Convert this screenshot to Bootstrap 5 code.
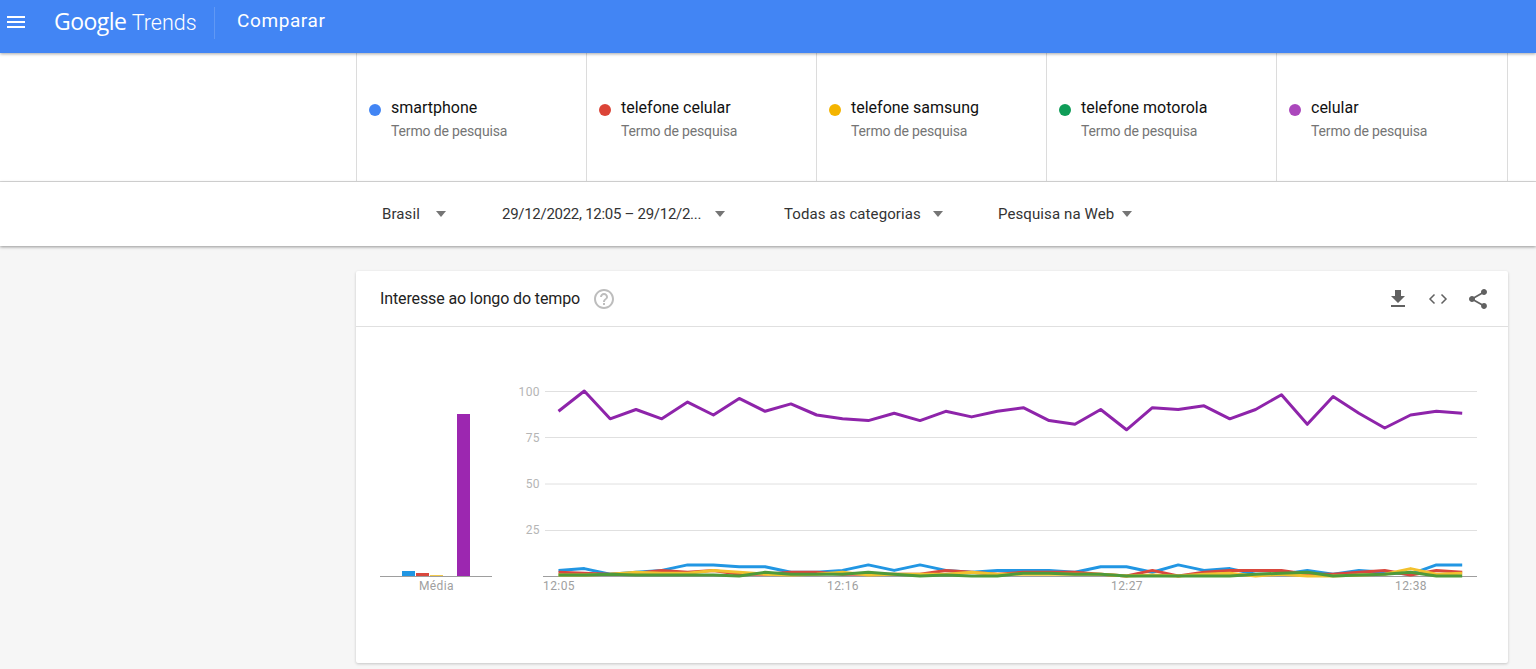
<!DOCTYPE html>
<html lang="pt-BR">
<head>
<meta charset="utf-8">
<title>Google Trends - Comparar</title>
<link href="https://cdn.jsdelivr.net/npm/bootstrap@5.3.0/dist/css/bootstrap.min.css" rel="stylesheet">
<style>
html,body{height:669px;overflow:hidden}
body{background:#f6f6f6;font-family:Roboto,"Liberation Sans",sans-serif;color:#212121}
.gt-top{background:#4285f4;height:53px;padding:0;box-shadow:0 1px 3px rgba(0,0,0,.35);position:relative;z-index:3;align-items:flex-start;flex-wrap:nowrap;justify-content:flex-start}
.gt-menu{width:24px;height:24px;margin:10px 0 0 4px;fill:#fff;flex:none}
.gt-logo{margin:5px 0 0 26px;color:#fff;font-size:23px;line-height:32px;white-space:nowrap;font-family:"Open Sans",sans-serif;letter-spacing:-.55px;width:144px;flex:none}
.gt-logo span{font-family:Roboto,sans-serif;font-weight:300;letter-spacing:0;font-size:21.5px}
.gt-sep{width:1px;height:32px;margin:7px 0 0 16px;background:rgba(255,255,255,.16);flex:none}
.gt-title{margin:5px 0 0 22px;color:#fff;font-size:19px;line-height:32px;letter-spacing:.6px}
.gt-terms{background:#fff;height:129px;border-bottom:1px solid #dcdcdc;padding-left:356px}
.gt-term{width:230px;height:128px;border-left:1px solid #dcdcdc;padding:43px 0 0 12px;display:flex;flex:none}
.gt-term:last-child{width:232px;border-right:1px solid #dcdcdc}
.gt-dot{width:12px;height:12px;border-radius:50%;margin:8px 10px 0 0;flex:none}
.gt-name{font-size:16px;line-height:24px;color:#111}
.gt-sub{font-size:14px;line-height:20px;color:#757575;margin-top:1px;letter-spacing:-.15px}
.gt-filters{background:#fff;height:64px;padding-left:382px;box-shadow:0 1px 3px rgba(0,0,0,.4);position:relative;z-index:2;font-size:15px;color:#333;letter-spacing:.1px}
.gt-arrow{width:0;height:0;border-left:5.5px solid transparent;border-right:5.5px solid transparent;border-top:6px solid #757575;flex:none}
.gt-f1{width:120px}.gt-f2{width:282px}.gt-f3{width:214px}
.gt-f1 .gt-arrow{margin-left:16px}
.gt-f2 .gt-arrow{margin-left:14px}
.gt-f2 span{letter-spacing:-.28px}
.gt-f3 .gt-arrow{margin-left:12px}
.gt-f4 .gt-arrow{margin-left:8px}
.gt-wrap{margin:25px 28px 0 356px}
.gt-card{height:392px;border:0;border-radius:2px;box-shadow:0 1px 3px rgba(0,0,0,.2);background:#fff}
.gt-head{height:56px;padding:0 18px 0 24px;background:#fff;border-bottom:1px solid #e0e0e0;font-size:16px;color:#222;letter-spacing:-.12px}
.gt-help{width:24px;height:24px;fill:#bdbdbd;margin-left:12px}
.gt-ico{width:24px;height:24px;fill:#616161;margin-left:16px}
.gt-code{fill:none;stroke:#616161;stroke-width:1.5}
.gt-canvas{padding:0;height:336px}
.gt-canvas svg{display:block;width:1152px;height:336px}
.gt-lab{font:12px Roboto,sans-serif;fill:#a0a0a0;letter-spacing:.4px}
.gt-laby{fill:#b5b5b5}
</style>
</head>
<body>
<nav class="navbar gt-top">
  <svg class="gt-menu" viewBox="0 0 24 24"><path d="M3 18h18v-2H3v2zm0-5h18v-2H3v2zm0-7v2h18V6H3z"/></svg>
  <div class="gt-logo">Google <span>Trends</span></div>
  <div class="gt-sep"></div>
  <div class="gt-title">Comparar</div>
</nav>
<section class="d-flex gt-terms">
  <div class="gt-term"><i class="gt-dot" style="background:#4285f4"></i><div><div class="gt-name">smartphone</div><div class="gt-sub">Termo de pesquisa</div></div></div>
  <div class="gt-term"><i class="gt-dot" style="background:#db4437"></i><div><div class="gt-name">telefone celular</div><div class="gt-sub">Termo de pesquisa</div></div></div>
  <div class="gt-term"><i class="gt-dot" style="background:#f4b400"></i><div><div class="gt-name">telefone samsung</div><div class="gt-sub">Termo de pesquisa</div></div></div>
  <div class="gt-term"><i class="gt-dot" style="background:#0f9d58"></i><div><div class="gt-name">telefone motorola</div><div class="gt-sub">Termo de pesquisa</div></div></div>
  <div class="gt-term"><i class="gt-dot" style="background:#ab47bc"></i><div><div class="gt-name">celular</div><div class="gt-sub">Termo de pesquisa</div></div></div>
</section>
<section class="d-flex align-items-center gt-filters">
  <div class="d-flex align-items-center gt-f1"><span>Brasil</span><i class="gt-arrow"></i></div>
  <div class="d-flex align-items-center gt-f2"><span>29/12/2022, 12:05 – 29/12/2...</span><i class="gt-arrow"></i></div>
  <div class="d-flex align-items-center gt-f3"><span>Todas as categorias</span><i class="gt-arrow"></i></div>
  <div class="d-flex align-items-center gt-f4"><span>Pesquisa na Web</span><i class="gt-arrow"></i></div>
</section>
<main class="gt-wrap">
  <div class="card gt-card">
    <div class="card-header d-flex align-items-center gt-head">
      <span>Interesse ao longo do tempo</span>
      <svg class="gt-help" viewBox="0 0 24 24"><path d="M11 18h2v-2h-2v2zm1-16C6.48 2 2 6.48 2 12s4.48 10 10 10 10-4.48 10-10S17.52 2 12 2zm0 18c-4.41 0-8-3.59-8-8s3.59-8 8-8 8 3.59 8 8-3.59 8-8 8zm0-14c-2.21 0-4 1.79-4 4h2c0-1.1.9-2 2-2s2 .9 2 2c0 2-3 1.75-3 5h2c0-2.25 3-2.5 3-5 0-2.21-1.79-4-4-4z"/></svg>
      <div class="ms-auto d-flex align-items-center">
        <svg class="gt-ico" viewBox="0 0 24 24"><path d="M19 9h-4V3H9v6H5l7 7 7-7zM5 18v2h14v-2H5z"/></svg>
        <svg class="gt-ico gt-code" viewBox="0 0 24 24"><path d="M8.500 7.500L4 12l4.500 4.500M15.500 7.500L20 12l-4.500 4.500"/></svg>
        <svg class="gt-ico" viewBox="0 0 24 24"><path d="M18 16.080c-.76 0-1.440.3-1.960.77L8.910 12.700c.05-.23.09-.46.09-.7s-.04-.47-.09-.7l7.050-4.110c.54.5 1.250.81 2.040.81 1.660 0 3-1.340 3-3s-1.340-3-3-3-3 1.340-3 3c0 .24.04.47.09.7L8.040 9.810C7.500 9.310 6.790 9 6 9c-1.660 0-3 1.340-3 3s1.340 3 3 3c.79 0 1.500-.31 2.040-.81l7.120 4.160c-.05.21-.08.43-.08.65 0 1.610 1.310 2.920 2.920 2.920 1.610 0 2.920-1.310 2.920-2.920s-1.310-2.920-2.920-2.920z"/></svg>
      </div>
    </div>
    <div class="card-body gt-canvas">
      <svg id="gtChart" viewBox="0 0 1152 336" xmlns="http://www.w3.org/2000/svg">
        <g stroke="#e0e0e0" stroke-width="1">
          <line x1="189" x2="1121" y1="64.500" y2="64.500"/>
          <line x1="189" x2="1121" y1="110.500" y2="110.500"/>
          <line x1="189" x2="1121" y1="157" y2="157"/>
          <line x1="189" x2="1121" y1="203.500" y2="203.500"/>
        </g>
        <line x1="187" x2="1121" y1="249.500" y2="249.500" stroke="#9e9e9e"/>
        <line x1="24" x2="136" y1="249.500" y2="249.500" stroke="#9e9e9e"/>
        <g class="gt-lab gt-laby" text-anchor="end">
          <text x="184" y="69">100</text><text x="184" y="115">75</text><text x="184" y="161">50</text><text x="184" y="207">25</text>
        </g>
        <g class="gt-lab" text-anchor="middle">
          <text x="203" y="263">12:05</text><text x="487" y="263">12:16</text><text x="771" y="263">12:27</text><text x="1055" y="263">12:38</text>
          <text x="80.500" y="263">Média</text>
        </g>
        <rect x="46" y="244" width="13" height="5" fill="#2196e3"/>
        <rect x="60" y="246" width="13" height="3" fill="#d9473d"/>
        <rect x="74" y="248" width="13" height="1" fill="#f2c94c"/>
        <rect x="101" y="87" width="13" height="162" fill="#9c27b0"/>
        <g id="gtLines" fill="none" stroke-width="3" stroke-linejoin="round"></g>
      </svg>
    </div>
  </div>
</main>
<script src="https://cdn.jsdelivr.net/npm/bootstrap@5.3.0/dist/js/bootstrap.bundle.min.js"></script>
<script>
var series=[
["#2196e3",[3,4,1,2,3,6,6,5,5,2,2,3,6,3,6,3,2,3,3,3,2,5,5,2,6,3,4,1,1,3,1,3,2,1,6,6]],
["#d9473d",[2,1.5,1,1.5,3,2,3,1,1,2,2,1,1,1,1,3,2,1,2,2,2,1,0,3,0,2,3,3,3,1,1,2,3,.5,3,2]],
["#f2c12e",[.5,.5,1,2,1.5,1.5,3,2,1,.5,1,2,.5,1,1,1,2,1,1,1,1,1,0,.5,0,1,1.5,0,1,0,0,.5,1,4,1,1.5]],
["#4f9a3a",[.5,.5,1,.5,.5,.5,.5,0,2,1,1,1,2,1,0,.5,0,0,1.5,1.5,1,1,0,0,0,0,0,1,1.5,2,0,.5,1,2,0,0]],
["#8e24aa",[89,100,85,90,85,94,87,96,89,93,87,85,84,88,84,89,86,89,91,84,82,90,79,91,90,92,85,90,98,82,97,88,80,87,89,88]]
];
var g=document.getElementById('gtLines'),x0=202.5,dx=25.82,y0=249,k=1.85;
series.forEach(function(s){
  var p=document.createElementNS('http://www.w3.org/2000/svg','polyline');
  p.setAttribute('stroke',s[0]);
  p.setAttribute('points',s[1].map(function(v,i){return (x0+i*dx).toFixed(1)+','+(y0-v*k).toFixed(1)}).join(' '));
  g.appendChild(p);
});
</script>
</body>
</html>
